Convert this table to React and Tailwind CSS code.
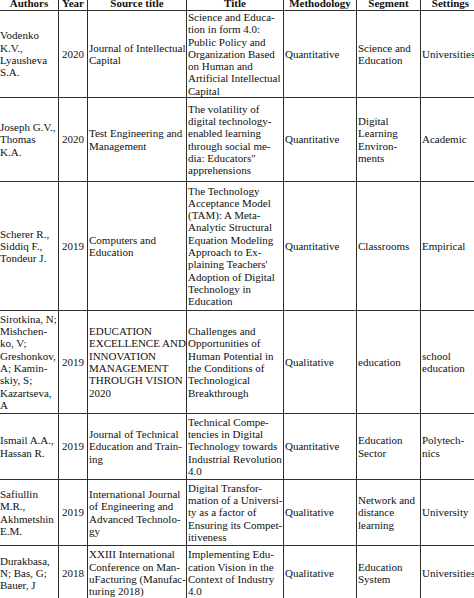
import React from "react";

const header = ["Authors", "Year", "Source title", "Title", "Methodology", "Segment", "Settings"];

const rows = [
  [
    ["Vodenko", "K.V.,", "Lyausheva", "S.A."],
    ["2020"],
    ["Journal of Intellectual", "Capital"],
    ["Science and Educa-", "tion in form 4.0:", "Public Policy and", "Organization Based", "on Human and", "Artificial Intellectual", "Capital"],
    ["Quantitative"],
    ["Science and", "Education"],
    ["Universities"],
  ],
  [
    ["Joseph G.V.,", "Thomas", "K.A."],
    ["2020"],
    ["Test Engineering and", "Management"],
    ["The volatility of", "digital technology-", "enabled learning", "through social me-", "dia: Educators\"", "apprehensions"],
    ["Quantitative"],
    ["Digital", "Learning", "Environ-", "ments"],
    ["Academic"],
  ],
  [
    ["Scherer R.,", "Siddiq F.,", "Tondeur J."],
    ["2019"],
    ["Computers and", "Education"],
    ["The Technology", "Acceptance Model", "(TAM): A Meta-", "Analytic Structural", "Equation Modeling", "Approach to Ex-", "plaining Teachers'", "Adoption of Digital", "Technology in", "Education"],
    ["Quantitative"],
    ["Classrooms"],
    ["Empirical"],
  ],
  [
    ["Sirotkina, N;", "Mishchen-", "ko, V;", "Greshonkov,", "A; Kamin-", "skiy, S;", "Kazartseva,", "A"],
    ["2019"],
    ["EDUCATION", "EXCELLENCE AND", "INNOVATION", "MANAGEMENT", "THROUGH VISION", "2020"],
    ["Challenges and", "Opportunities of", "Human Potential in", "the Conditions of", "Technological", "Breakthrough"],
    ["Qualitative"],
    ["education"],
    ["school", "education"],
  ],
  [
    ["Ismail A.A.,", "Hassan R."],
    ["2019"],
    ["Journal of Technical", "Education and Train-", "ing"],
    ["Technical Compe-", "tencies in Digital", "Technology towards", "Industrial Revolution", "4.0"],
    ["Quantitative"],
    ["Education", "Sector"],
    ["Polytech-", "nics"],
  ],
  [
    ["Safiullin", "M.R.,", "Akhmetshin", "E.M."],
    ["2019"],
    ["International Journal", "of Engineering and", "Advanced Technolo-", "gy"],
    ["Digital Transfor-", "mation of a Universi-", "ty as a factor of", "Ensuring its Compet-", "itiveness"],
    ["Qualitative"],
    ["Network and", "distance", "learning"],
    ["University"],
  ],
  [
    ["Durakbasa,", "N; Bas, G;", "Bauer, J"],
    ["2018"],
    ["XXIII International", "Conference on Man-", "uFacturing (Manufac-", "turing 2018)"],
    ["Implementing Edu-", "cation Vision in the", "Context of Industry", "4.0"],
    ["Qualitative"],
    ["Education", "System"],
    ["Universities"],
  ],
];

function Cell({ lines, col }) {
  const align =
    col === 1 ? "items-center text-center" : col === 0 ? "items-start pl-0" : "items-start pl-[1px]";
  return (
    <div className={`flex flex-col justify-center border-r border-b border-[#2e2e2e] overflow-visible ${align}`}>
      {lines.map((l, i) => (
        <div key={i} className="whitespace-nowrap leading-[12.3px]">
          {l}
        </div>
      ))}
    </div>
  );
}

export default function App() {
  return (
    <div className="w-[474px] h-[598px] overflow-hidden bg-white text-[#111] text-[11px] font-['Liberation_Serif','Times_New_Roman',serif]">
      <div className="-mt-[3px] grid grid-cols-[59px_29px_99px_97px_73px_64px_60px] grid-rows-[14px_87px_84px_129px_103px_66px_66px_55px]">
        {header.map((h) => (
          <div
            key={h}
            className="flex items-center justify-center border-r border-b border-[#2e2e2e] font-bold leading-[12.3px] whitespace-nowrap"
          >
            {h}
          </div>
        ))}
        {rows.map((r, ri) =>
          r.map((lines, ci) => <Cell key={`${ri}-${ci}`} lines={lines} col={ci} />)
        )}
      </div>
    </div>
  );
}
